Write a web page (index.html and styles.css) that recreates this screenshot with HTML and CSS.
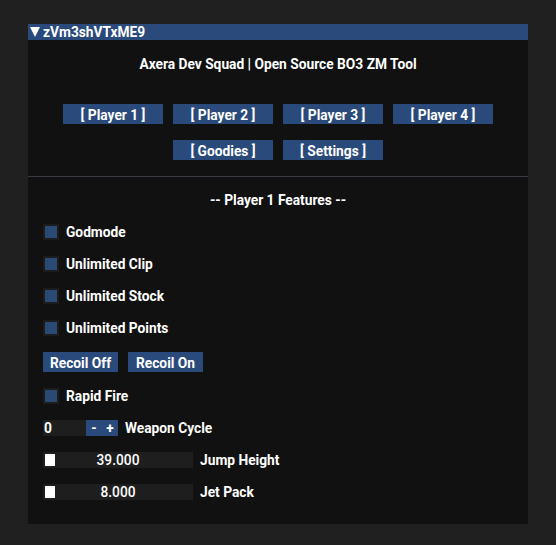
FILE: index.html
```html
<!DOCTYPE html>
<html lang="en">
<head>
  <meta charset="UTF-8">
  <title>zVm3shVTxME9</title>
  <link rel="stylesheet" href="styles.css">
</head>
<body>
  <div class="window">
    <div class="titlebar"><span class="arrow"></span>zVm3shVTxME9</div>

    <div class="header">Axera Dev Squad | Open Source BO3 ZM Tool</div>

    <div class="tabs">
      <button class="btn tab">[ Player 1 ]</button>
      <button class="btn tab">[ Player 2 ]</button>
      <button class="btn tab">[ Player 3 ]</button>
      <button class="btn tab">[ Player 4 ]</button>
    </div>
    <div class="tabs second">
      <button class="btn tab">[ Goodies ]</button>
      <button class="btn tab">[ Settings ]</button>
    </div>

    <div class="separator"></div>

    <div class="heading">-- Player 1 Features --</div>

    <div class="features">
      <label class="row"><span class="check"><span class="check-inner"></span></span>Godmode</label>
      <label class="row"><span class="check"><span class="check-inner"></span></span>Unlimited Clip</label>
      <label class="row"><span class="check"><span class="check-inner"></span></span>Unlimited Stock</label>
      <label class="row"><span class="check"><span class="check-inner"></span></span>Unlimited Points</label>

      <div class="row buttons">
        <button class="btn recoil">Recoil Off</button>
        <button class="btn recoil">Recoil On</button>
      </div>

      <label class="row"><span class="check"><span class="check-inner"></span></span>Rapid Fire</label>

      <div class="row">
        <span class="num-input">0</span>
        <span class="step">-</span>
        <span class="step">+</span>
        <span class="label">Weapon Cycle</span>
      </div>

      <div class="row">
        <span class="slider"><span class="grab"></span>39.000</span>
        <span class="label">Jump Height</span>
      </div>

      <div class="row">
        <span class="slider"><span class="grab"></span>8.000</span>
        <span class="label">Jet Pack</span>
      </div>
    </div>
  </div>
</body>
</html>
```

FILE: styles.css
```css
body {
  margin: 0;
  padding: 24px 28px;
  background-color: #202020;
  color: #fff;
  font-family: Roboto, "Liberation Sans", sans-serif;
  font-size: 13.75px;
  font-weight: bold;
}

.window {
  width: 500px;
  height: 500px;
  background-color: #111111;
}

.titlebar {
  display: flex;
  align-items: center;
  height: 16px;
  line-height: 17px;
  padding-left: 2px;
  background-color: #294a7a;
}

.arrow {
  width: 0;
  height: 0;
  margin-right: 3px;
  border-left: 5.5px solid transparent;
  border-right: 5.5px solid transparent;
  border-top: 10px solid #fff;
}

.header {
  margin-top: 16px;
  height: 16px;
  line-height: 17px;
  text-align: center;
}

.tabs {
  display: flex;
  justify-content: center;
  gap: 10px;
  margin-top: 32px;
}

.tabs.second {
  margin-top: 16px;
}

.btn {
  height: 20px;
  padding: 0;
  padding-top: 1px;
  border: none;
  background-color: #294a7a;
  color: #fff;
  font: inherit;
  line-height: 20px;
}

.tab {
  width: 100px;
}

.separator {
  height: 1px;
  margin-top: 16px;
  background-color: #3a3a42;
}

.heading {
  margin-top: 15px;
  height: 16px;
  line-height: 17px;
  text-align: center;
}

.features {
  display: flex;
  flex-direction: column;
  gap: 16px;
  margin-top: 16px;
  padding-left: 15px;
}

.row {
  display: flex;
  align-items: center;
  height: 16px;
  line-height: 17px;
}

.row.buttons {
  height: 20px;
  gap: 10px;
}

.check {
  width: 16px;
  height: 16px;
  box-sizing: border-box;
  padding: 2px;
  margin-right: 7px;
  background-color: #1c1c1c;
}

.check-inner {
  display: block;
  width: 12px;
  height: 12px;
  background-color: #2b4a73;
}

.recoil {
  width: 75px;
}

.num-input {
  width: 42px;
  height: 16px;
  padding-left: 1px;
  background-color: #1e1e1e;
}

.step {
  width: 16px;
  height: 16px;
  text-align: center;
  background-color: #294a7a;
}

.label {
  margin-left: 7px;
}

.slider {
  position: relative;
  width: 150px;
  height: 16px;
  text-align: center;
  font-weight: 500;
  background-color: #1e1e1e;
}

.grab {
  position: absolute;
  left: 2px;
  top: 2px;
  width: 10px;
  height: 12px;
  background-color: #ffffff;
}
```
